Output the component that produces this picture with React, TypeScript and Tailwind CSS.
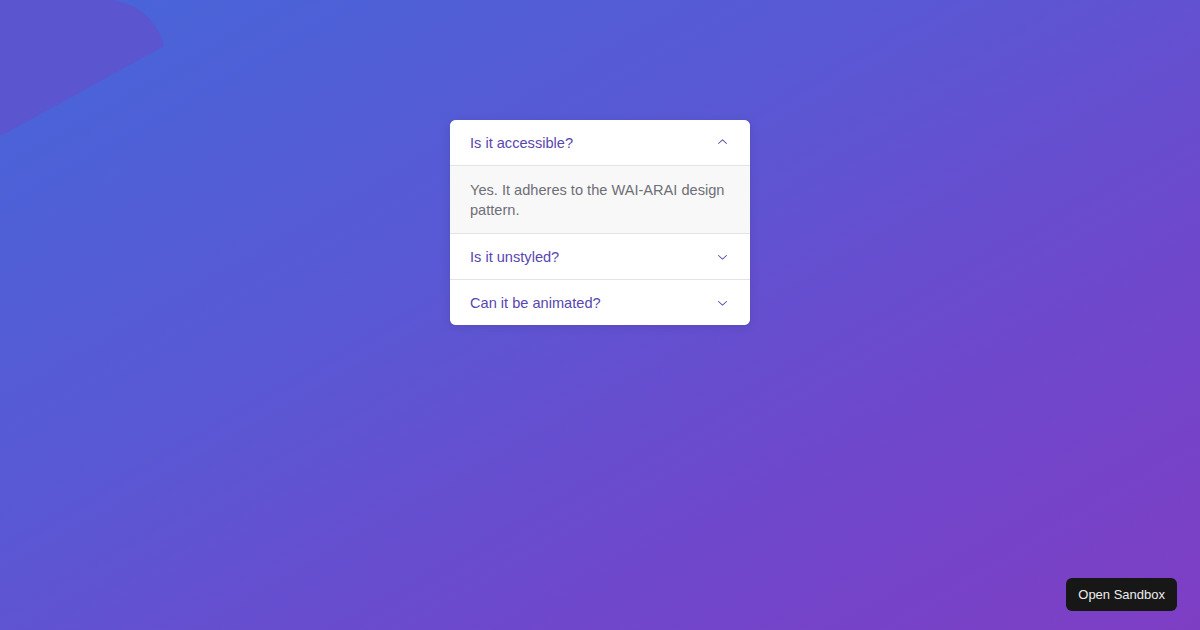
import { useState } from 'react';

const items = [
  { id: 'item-1', q: 'Is it accessible?', a: 'Yes. It adheres to the WAI-ARAI design pattern.' },
  { id: 'item-2', q: 'Is it unstyled?', a: "Yes. It's unstyled by default, giving you freedom over the look and feel." },
  { id: 'item-3', q: 'Can it be animated?', a: 'Yes! You can animate the Accordion with CSS or JavaScript.' },
];

function Chevron({ open }: { open: boolean }) {
  return (
    <svg
      width="15"
      height="15"
      viewBox="0 0 15 15"
      fill="none"
      className={open ? 'rotate-180 text-[#5746af]' : 'text-[#5746af]'}
    >
      <path
        d="M3.13523 6.15803C3.3241 5.95657 3.64052 5.94637 3.84197 6.13523L7.5 9.56464L11.158 6.13523C11.3595 5.94637 11.6759 5.95657 11.8648 6.15803C12.0536 6.35949 12.0434 6.67591 11.842 6.86477L7.84197 10.6148C7.64964 10.7951 7.35036 10.7951 7.15803 10.6148L3.15803 6.86477C2.95657 6.67591 2.94637 6.35949 3.13523 6.15803Z"
        fill="currentColor"
        fillRule="evenodd"
        clipRule="evenodd"
      />
    </svg>
  );
}

export default function App() {
  const [open, setOpen] = useState('item-1');

  return (
    <div className="relative h-[630px] w-[1200px] overflow-hidden bg-[linear-gradient(150deg,#4766d9_0%,#5a58d4_40%,#6e48cc_70%,#7e3ec4_100%)] font-['Liberation_Sans',Arial,sans-serif]">
      <svg className="absolute left-0 top-0" width="170" height="140" viewBox="0 0 170 140">
        <path d="M0 0 L112 0 C140 4 158 22 164 46 L4 134 L0 135 Z" fill="#5b55d0" />
      </svg>

      <div className="flex justify-center pt-[120px]">
        <div className="w-[300px] rounded-md bg-[#e4e2e9] shadow-[0_2px_10px_rgba(0,0,0,0.1)]">
          {items.map((item, i) => {
            const isOpen = open === item.id;
            return (
              <div
                key={item.id}
                className={`overflow-hidden ${i > 0 ? 'mt-px' : ''} ${i === 0 ? 'rounded-t-md' : ''} ${i === items.length - 1 ? 'rounded-b-md' : ''}`}
              >
                <button
                  onClick={() => setOpen(isOpen ? '' : item.id)}
                  className="flex h-[45px] w-full items-center justify-between bg-white px-5 text-[14.6px] leading-none text-[#5746af]"
                >
                  <span className="pt-[2px]">{item.q}</span>
                  <Chevron open={isOpen} />
                </button>
                {isOpen && (
                  <div className="mt-px bg-[#f8f8f8] px-5 py-[13.5px] text-[14.6px] leading-[20px] text-[#6f6e77]">
                    {item.a}
                  </div>
                )}
              </div>
            );
          })}
        </div>
      </div>

      <button className="absolute bottom-[19px] right-[23px] h-[33px] rounded-md bg-[#171717] px-[12px] text-[13px] text-[#ededed]">
        Open Sandbox
      </button>
    </div>
  );
}
